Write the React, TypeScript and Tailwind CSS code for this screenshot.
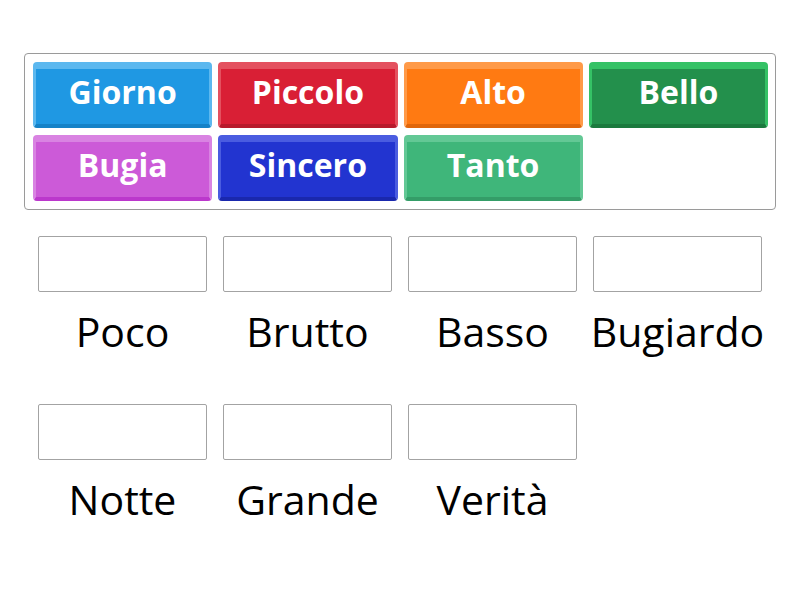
const tiles = [
  { label: "Giorno", bg: "bg-[#1f98e3]", light: "border-[#5cb8ef]", dark: "border-b-[#1582c7]" },
  { label: "Piccolo", bg: "bg-[#d91f35]", light: "border-[#e4515f]", dark: "border-b-[#b81a2c]" },
  { label: "Alto", bg: "bg-[#ff7a12]", light: "border-[#ff9a48]", dark: "border-b-[#e0660a]" },
  { label: "Bello", bg: "bg-[#23904c]", light: "border-[#35c266]", dark: "border-b-[#1b7a3e]" },
  { label: "Bugia", bg: "bg-[#cc5ad8]", light: "border-[#d983e2]", dark: "border-b-[#bb38cc]" },
  { label: "Sincero", bg: "bg-[#2234d0]", light: "border-[#4a5ce0]", dark: "border-b-[#1a28ad]" },
  { label: "Tanto", bg: "bg-[#3fb67a]", light: "border-[#63c895]", dark: "border-b-[#349d68]" },
];

const targets = ["Poco", "Brutto", "Basso", "Bugiardo", "Notte", "Grande", "Verità"];

export default function App() {
  return (
    <div className="w-[800px] h-[600px] bg-white" style={{ fontFamily: '"Open Sans", sans-serif' }}>
      <div className="pt-[53px] px-[24px]">
        <div className="border border-[#9a9a9a] rounded-[4px] pt-[8px] pb-[8px] pl-[8px] pr-[7px] grid grid-cols-4 gap-x-[6px] gap-y-[7px]">
          {tiles.map((t) => (
            <div
              key={t.label}
              className={`h-[66px] rounded-[4px] border-t-[7px] border-x-[3px] border-b-[4px] ${t.bg} ${t.light} ${t.dark} flex items-center justify-center`}
            >
              <span className="text-white font-bold text-[32px] leading-none -mt-[9px]">{t.label}</span>
            </div>
          ))}
        </div>
      </div>
      <div className="pl-[30px] pt-[26px] grid grid-cols-[repeat(4,185px)]">
        {targets.map((t) => (
          <div key={t} className="flex flex-col items-center h-[168px]">
            <div className="w-[169px] h-[56px] border border-[#a3a3a3] rounded-[2px]" />
            <div className="mt-[13px] text-[41px] leading-[52px] text-black">{t}</div>
          </div>
        ))}
      </div>
    </div>
  );
}
